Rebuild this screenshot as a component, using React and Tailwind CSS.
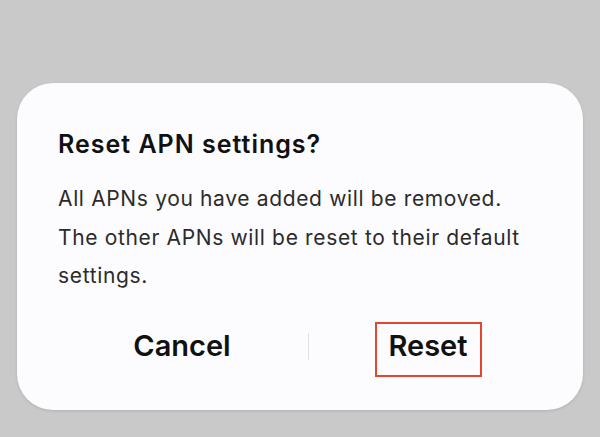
import React from "react";

function App() {
  return (
    <div
      className="w-[600px] h-[437px] bg-[#c9c9c9] pt-[83px] px-[17px] overflow-hidden"
      style={{ fontFamily: "Inter, 'Noto Sans', sans-serif" }}
    >
      <div className="bg-[#fcfcfe] rounded-[36px] pt-[45px] pb-[33px] shadow-[0_1px_3px_rgba(0,0,0,0.12)]">
        <div className="pl-[41px] pr-[30px]">
          <h1 className="text-[25px] leading-[32px] font-semibold text-[#111] tracking-[1px]">
            Reset APN settings?
          </h1>
          <p className="mt-[20px] text-[21px] leading-[38.5px] text-[#2b2b2b] tracking-[0.65px]">
            All APNs you have added will be removed.
            <br />
            The other APNs will be reset to their default
            <br />
            settings.
          </p>
        </div>

        <div className="mt-[26px] pl-[39px] flex items-center h-[55px]">
          <div className="w-[252px] flex justify-center">
            <button className="mb-[7px] text-[29px] font-semibold text-[#111]">Cancel</button>
          </div>
          <div className="w-px h-[27px] bg-[#e2e2e4] mb-[6px]"></div>
          <div className="w-[238px] flex justify-center">
            <button className="w-[107px] h-[55px] border-2 border-[#e0472d] flex items-center justify-center pb-[7px] text-[29px] font-semibold text-[#111]">
              Reset
            </button>
          </div>
        </div>
      </div>
    </div>
  );
}

export default App;
